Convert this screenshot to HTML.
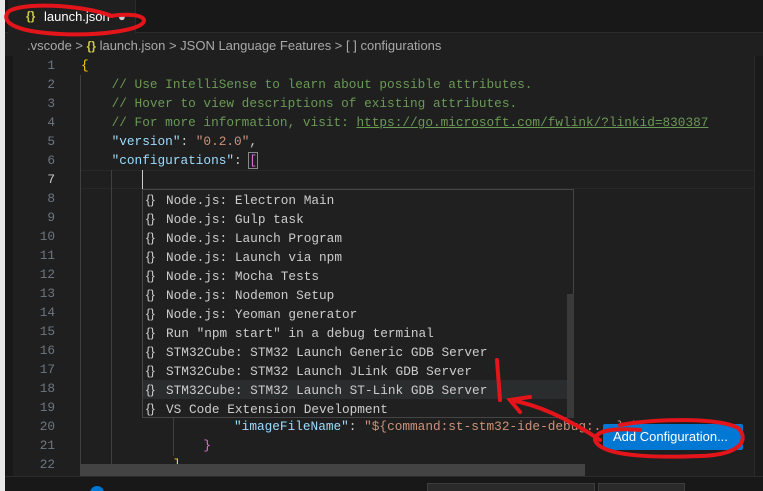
<!DOCTYPE html>
<html style="width:763px;height:491px;overflow:hidden"><head><meta charset="utf-8"><style>
*{margin:0;padding:0;box-sizing:border-box}
body{width:763px;height:491px;overflow:hidden;background:#1f1f1f;position:relative;font-family:"Liberation Sans",sans-serif}
.abs{position:absolute}
.mono{font-family:"Liberation Mono",monospace;font-size:12.75px;white-space:pre}
.ln{position:absolute;left:20px;width:35px;text-align:right;color:#6e7681;font-family:"Liberation Mono",monospace;font-size:12.75px;line-height:19px}
.code{position:absolute;left:81px;line-height:19px}
.c{color:#6a9955}.k{color:#9cdcfe}.s{color:#ce9178}.p{color:#cccccc}
.sug{position:absolute;left:142px;top:189px;width:432px;height:229px;background:#202020;border:1px solid #454545}
.sug div{height:19px;line-height:19px;padding-left:3px;color:#cccccc;font-family:"Liberation Mono",monospace;font-size:12.75px;white-space:pre}
.sug b{font-weight:normal;font-family:"Liberation Sans",sans-serif;font-size:13px;display:inline-block;width:20px}
</style></head><body>
<div class="abs" style="left:0;top:0;width:5px;height:491px;background:#e8e8e8"></div>
<div class="abs" style="left:5px;top:0;width:758px;height:33px;background:#181818;border-bottom:1px solid #2b2b2b"></div>
<div class="abs" style="left:8px;top:0;width:128px;height:34px;background:#1f1f1f;border-right:1px solid #2b2b2b"></div>
<div class="abs" style="left:26px;top:9px;color:#cbcb41;font-size:12px;font-weight:bold">{}</div>
<div class="abs" style="left:44px;top:9px;color:#ffffff;font-size:13px">launch.json</div>
<div class="abs" style="left:118px;top:9px;color:#ccc;font-size:13px">●</div>
<div class="abs" style="left:27px;top:38px;color:#a9a9a9;font-size:13px;white-space:pre">.vscode &gt; <span style="color:#cbcb41;font-weight:bold;font-size:12px">{}</span> launch.json &gt; JSON Language Features &gt; [ ] configurations</div>
<div class="abs" style="left:5px;top:56px;width:8px;height:420px;background:#181818"></div>
<div class="abs" style="left:754px;top:56px;width:9px;height:420px;background:#1a1a1a;border-left:1px solid #2b2b2b"></div>
<div class="abs" style="left:80px;top:170px;width:674px;height:19px;border-top:1px solid #282828;border-bottom:1px solid #282828"></div>
<div class="ln" style="top:56px">1<br>2<br>3<br>4<br>5<br>6<br><span style="color:#ccc">7</span><br>8<br>9<br>10<br>11<br>12<br>13<br>14<br>15<br>16<br>17<br>18<br>19<br>20<br>21<br>22</div>
<div class="abs" style="left:80px;top:75px;width:1px;height:400px;background:#404040"></div>
<div class="abs" style="left:111px;top:170px;width:1px;height:305px;background:#404040"></div>
<div class="abs" style="left:142px;top:170px;width:1px;height:20px;background:#ccc"></div>
<div class="abs" style="left:173px;top:418px;width:1px;height:38px;background:#404040"></div>
<div class="code mono" style="top:56px"><span style="color:#ffd700">{</span>
<span class="c">    // Use IntelliSense to learn about possible attributes.</span>
<span class="c">    // Hover to view descriptions of existing attributes.</span>
<span class="c">    // For more information, visit: <u>https://go.microsoft.com/fwlink/?linkid=830387</u></span>
<span class="k">    "version"</span><span class="p">: </span><span class="s">"0.2.0"</span><span class="p">,</span>
<span class="k">    "configurations"</span><span class="p">: </span><span style="color:#da70d6;outline:1px solid #888">[</span>
 
 
 
 
 
 
<span class="p">                                                        ,</span>
 
 
<span class="s">                                                        ld}"</span><span class="p">,</span>
 
 
 
<span class="k">                    "imageFileName"</span><span class="p">: </span><span class="s">"${command:st-stm32-ide-debug:...}-b</span>
<span style="color:#da70d6">                }</span>
<span style="color:#ffd700">            ]</span></div>
<div class="abs" style="left:80px;top:464px;width:505px;height:12px;background:#434343"></div>
<div class="sug">
<div><b>{}</b>Node.js: Electron Main</div>
<div><b>{}</b>Node.js: Gulp task</div>
<div><b>{}</b>Node.js: Launch Program</div>
<div><b>{}</b>Node.js: Launch via npm</div>
<div><b>{}</b>Node.js: Mocha Tests</div>
<div><b>{}</b>Node.js: Nodemon Setup</div>
<div><b>{}</b>Node.js: Yeoman generator</div>
<div><b>{}</b>Run "npm start" in a debug terminal</div>
<div><b>{}</b>STM32Cube: STM32 Launch Generic GDB Server</div>
<div><b>{}</b>STM32Cube: STM32 Launch JLink GDB Server</div>
<div style="background:#2a2d2e"><b>{}</b>STM32Cube: STM32 Launch ST-Link GDB Server</div>
<div><b>{}</b>VS Code Extension Development</div>
<div class="abs" style="left:424px;top:104px;width:7px;height:124px;background:#3a3a3a;padding:0"></div>
</div>
<div class="abs" style="left:603px;top:424px;width:140px;height:26px;background:#0078d4;border-radius:2px;color:#fff;font-size:13px;line-height:26px;padding-left:10px">Add Configuration...</div>
<div class="abs" style="left:5px;top:476px;width:758px;height:15px;background:#181818;border-top:1px solid #2b2b2b"></div>
<div class="abs" style="left:90px;top:486px;width:14px;height:14px;border-radius:50%;background:#0078d4"></div>
<div class="abs" style="left:427px;top:483px;width:168px;height:10px;background:#2a2a2a;border:1px solid #3c3c3c"></div>
<div class="abs" style="left:598px;top:483px;width:87px;height:10px;background:#2a2a2a;border:1px solid #3c3c3c"></div>
<svg class="abs" style="left:0;top:0" width="763" height="491" fill="none" stroke="#e3151b" stroke-width="4" stroke-linecap="round">
<path d="M112 16 C80 4 20 2 8 12 C0 24 20 32 60 34 C100 36 145 30 144 20 C142 14 125 14 110 16"/>
<path d="M497 360 L500 400"/>
<path d="M530 397 L510 400 L520 412 M510 400 C540 405 570 420 600 440"/>
<path d="M620 425 C660 418 720 418 738 428 C750 440 740 455 700 456 C650 458 600 456 595 440 C595 430 615 428 640 430"/>
</svg>
</body></html>
